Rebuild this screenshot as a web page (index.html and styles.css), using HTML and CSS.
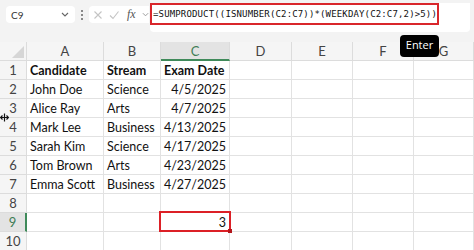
FILE: index.html
```html
<!DOCTYPE html>
<html lang="en">
<head>
    <meta charset="UTF-8">
    <title>Weekend exam count</title>
    <link rel="stylesheet" href="styles.css">
</head>
<body>
    <div class="app">
        <div class="toolbar">
            <div class="namebox">
                <span>C9</span>
                <svg class="chev" viewBox="0 0 8 5"><path d="M1 1l3 3 3-3"/></svg>
            </div>
            <div class="grip"><i></i><i></i><i></i></div>
            <div class="controls">
                <svg class="ctl" viewBox="0 0 10 10"><path d="M1.5 1.5l7 7M8.5 1.5l-7 7"/></svg>
                <svg class="ctl" viewBox="0 0 10 10"><path d="M1 5.5l3 3 5.5-7"/></svg>
                <span class="fx">fx</span>
                <svg class="chev small" viewBox="0 0 8 5"><path d="M1 1l3 3 3-3"/></svg>
            </div>
            <div class="formula-bar">
                <div class="formula">=SUMPRODUCT((ISNUMBER(C2:C7))*(WEEKDAY(C2:C7,2)&gt;5))</div>
            </div>
        </div>

        <div class="sheet">
            <div class="corner"></div>
            <div class="colhead">A</div>
            <div class="colhead">B</div>
            <div class="colhead active">C</div>
            <div class="colhead">D</div>
            <div class="colhead">E</div>
            <div class="colhead">F</div>
            <div class="colhead">G</div>

            <div class="rowhead">1</div>
            <div class="cell bold">Candidate</div><div class="cell bold">Stream</div><div class="cell bold">Exam Date</div>
            <div class="cell"></div><div class="cell"></div><div class="cell"></div><div class="cell"></div>

            <div class="rowhead">2</div>
            <div class="cell">John Doe</div><div class="cell">Science</div><div class="cell num">4/5/2025</div>
            <div class="cell"></div><div class="cell"></div><div class="cell"></div><div class="cell"></div>

            <div class="rowhead">3</div>
            <div class="cell">Alice Ray</div><div class="cell">Arts</div><div class="cell num">4/7/2025</div>
            <div class="cell"></div><div class="cell"></div><div class="cell"></div><div class="cell"></div>

            <div class="rowhead">4</div>
            <div class="cell">Mark Lee</div><div class="cell">Business</div><div class="cell num">4/13/2025</div>
            <div class="cell"></div><div class="cell"></div><div class="cell"></div><div class="cell"></div>

            <div class="rowhead">5</div>
            <div class="cell">Sarah Kim</div><div class="cell">Science</div><div class="cell num">4/17/2025</div>
            <div class="cell"></div><div class="cell"></div><div class="cell"></div><div class="cell"></div>

            <div class="rowhead">6</div>
            <div class="cell">Tom Brown</div><div class="cell">Arts</div><div class="cell num">4/23/2025</div>
            <div class="cell"></div><div class="cell"></div><div class="cell"></div><div class="cell"></div>

            <div class="rowhead">7</div>
            <div class="cell">Emma Scott</div><div class="cell">Business</div><div class="cell num">4/27/2025</div>
            <div class="cell"></div><div class="cell"></div><div class="cell"></div><div class="cell"></div>

            <div class="rowhead">8</div>
            <div class="cell"></div><div class="cell"></div><div class="cell"></div>
            <div class="cell"></div><div class="cell"></div><div class="cell"></div><div class="cell"></div>

            <div class="rowhead active">9</div>
            <div class="cell"></div><div class="cell"></div><div class="cell num selected">3</div>
            <div class="cell"></div><div class="cell"></div><div class="cell"></div><div class="cell"></div>

            <div class="rowhead">10</div>
            <div class="cell"></div><div class="cell"></div><div class="cell"></div>
            <div class="cell"></div><div class="cell"></div><div class="cell"></div><div class="cell"></div>
        </div>

        <div class="tooltip">Enter</div>
        <svg class="cursor" viewBox="0 0 9 9"><path d="M4.5 0.5v8M0.5 4.5h8M2.5 2.5L0.5 4.5l2 2M6.5 2.5l2 2-2 2"/></svg>
    </div>
</body>
</html>
```

FILE: styles.css
```css
* {
    margin: 0;
    padding: 0;
    box-sizing: border-box;
}

body {
    font-family: Lato, "Open Sans", sans-serif;
    background: #f3f3f3;
}

.app {
    position: relative;
    width: 474px;
    height: 250px;
    overflow: hidden;
    background: #f3f3f3;
}

/* formula bar row */
.toolbar {
    display: flex;
    align-items: flex-start;
    height: 42px;
    padding-top: 3px;
}

.namebox {
    display: flex;
    align-items: center;
    justify-content: space-between;
    width: 69px;
    height: 17px;
    margin: 3px 0 0 6px;
    padding: 0 6px 0 5px;
    background: #fff;
    border-radius: 4px;
    font-size: 10px;
    color: #333;
}

.chev {
    width: 8px;
    height: 5px;
    fill: none;
    stroke: #666;
    stroke-width: 1.1;
}

.chev.small {
    width: 7px;
    stroke: #999;
}

.grip {
    display: flex;
    flex-direction: column;
    gap: 2px;
    margin: 7px 6px 0 6px;
}

.grip i {
    width: 2px;
    height: 2px;
    background: #666;
    border-radius: 50%;
}

.controls {
    display: flex;
    align-items: center;
    gap: 6px;
    width: 60px;
    height: 17px;
    margin-top: 3px;
    padding-left: 4px;
    background: #fff;
    border-radius: 4px 0 0 4px;
}

.ctl {
    width: 10px;
    height: 10px;
    fill: none;
    stroke: #c4c4c4;
    stroke-width: 1.1;
}

.fx {
    font-family: "Liberation Serif", serif;
    font-style: italic;
    font-size: 12px;
    color: #555;
    margin-left: 2px;
}

.formula-bar {
    width: 320px;
    height: 29px;
    margin-left: 1px;
    background: #fff;
    border-radius: 0 0 4px 4px;
}

.formula {
    width: 289px;
    height: 22px;
    border: 2px solid #d9262b;
    padding-left: 1px;
    font-family: "DejaVu Sans Mono", "Liberation Mono", monospace;
    font-size: 9px;
    letter-spacing: 0.15px;
    line-height: 18px;
    color: #111;
    white-space: nowrap;
    overflow: hidden;
}

/* worksheet */
.sheet {
    display: grid;
    grid-template-columns: 27px 77px 57px 69px 62px 61px 61px 60px;
    grid-auto-rows: 19px;
    background: #fff;
}

.corner,
.colhead,
.rowhead {
    background: #f5f5f5;
    color: #444;
    border-right: 1px solid #dcdcdc;
    border-bottom: 1px solid #dcdcdc;
}

.corner {
    position: relative;
}

.corner::after {
    content: '';
    position: absolute;
    right: 2px;
    bottom: 2px;
    border-left: 12px solid transparent;
    border-bottom: 12px solid #d6d6d6;
}

.colhead {
    display: flex;
    align-items: center;
    justify-content: center;
    font-size: 13px;
}

.colhead.active {
    background: #e3e3e3;
    color: #3f7d56;
    border-bottom: 2px solid #3f8a5a;
}

.rowhead {
    display: flex;
    align-items: center;
    justify-content: center;
    font-size: 13px;
}

.rowhead.active {
    background: #e3e3e3;
    color: #3f7d56;
    border-right: 2px solid #3f8a5a;
}

.cell {
    display: flex;
    align-items: center;
    padding: 0 3px;
    font-size: 12.5px;
    color: #111;
    white-space: nowrap;
    border-right: 1px solid #e2e2e2;
    border-bottom: 1px solid #e2e2e2;
}

.bold {
    font-weight: bold;
}

.num {
    justify-content: flex-end;
}

.selected {
    position: relative;
}

.selected::after {
    content: '';
    position: absolute;
    top: -2px;
    left: -2px;
    right: -2px;
    bottom: -1px;
    border: 2px solid #dc2026;
}

.selected::before {
    content: '';
    position: absolute;
    right: -3px;
    bottom: -2px;
    width: 4px;
    height: 4px;
    background: #b3161b;
    z-index: 1;
}

.tooltip {
    position: absolute;
    left: 400px;
    top: 35px;
    width: 39px;
    height: 22px;
    background: #000;
    color: #fff;
    border-radius: 4px;
    font-family: "Open Sans", sans-serif;
    font-size: 11px;
    line-height: 20px;
    text-align: center;
}

.cursor {
    position: absolute;
    left: 0;
    top: 113px;
    width: 9px;
    height: 9px;
    fill: none;
    stroke: #111;
    stroke-width: 1.2;
}
```
